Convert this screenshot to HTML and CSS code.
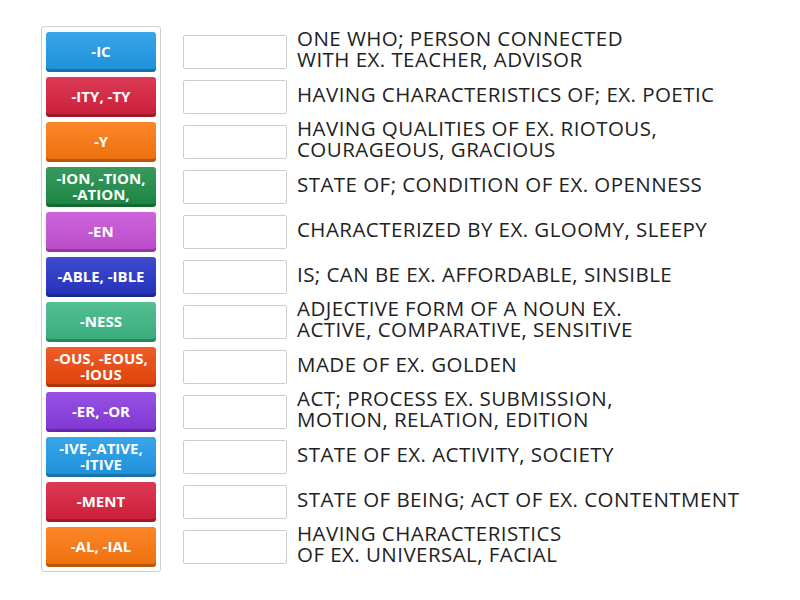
FILE: index.html
```html
<!DOCTYPE html>
<html lang="en">
<head>
    <meta charset="UTF-8">
    <title>Match up</title>
    <link rel="stylesheet" href="styles.css">
</head>
<body>

    <div class="board">
        <div class="tiles">
            <div class="tile blue">-IC</div>
            <div class="tile red">-ITY, -TY</div>
            <div class="tile orange">-Y</div>
            <div class="tile green">-ION, -TION,<br>-ATION,</div>
            <div class="tile pink">-EN</div>
            <div class="tile navy">-ABLE, -IBLE</div>
            <div class="tile teal">-NESS</div>
            <div class="tile rust">-OUS, -EOUS,<br>-IOUS</div>
            <div class="tile purple">-ER, -OR</div>
            <div class="tile blue">-IVE,-ATIVE,<br>-ITIVE</div>
            <div class="tile red">-MENT</div>
            <div class="tile orange">-AL, -IAL</div>
        </div>

        <div class="rows">
            <div class="row"><div class="slot"></div><div class="def">ONE WHO; PERSON CONNECTED<br>WITH EX. TEACHER, ADVISOR</div></div>
            <div class="row"><div class="slot"></div><div class="def">HAVING CHARACTERISTICS OF; EX. POETIC</div></div>
            <div class="row"><div class="slot"></div><div class="def">HAVING QUALITIES OF EX. RIOTOUS,<br>COURAGEOUS, GRACIOUS</div></div>
            <div class="row"><div class="slot"></div><div class="def">STATE OF; CONDITION OF EX. OPENNESS</div></div>
            <div class="row"><div class="slot"></div><div class="def">CHARACTERIZED BY EX. GLOOMY, SLEEPY</div></div>
            <div class="row"><div class="slot"></div><div class="def">IS; CAN BE EX. AFFORDABLE, SINSIBLE</div></div>
            <div class="row"><div class="slot"></div><div class="def">ADJECTIVE FORM OF A NOUN EX.<br>ACTIVE, COMPARATIVE, SENSITIVE</div></div>
            <div class="row"><div class="slot"></div><div class="def">MADE OF EX. GOLDEN</div></div>
            <div class="row"><div class="slot"></div><div class="def">ACT; PROCESS EX. SUBMISSION,<br>MOTION, RELATION, EDITION</div></div>
            <div class="row"><div class="slot"></div><div class="def">STATE OF EX. ACTIVITY, SOCIETY</div></div>
            <div class="row"><div class="slot"></div><div class="def">STATE OF BEING; ACT OF EX. CONTENTMENT</div></div>
            <div class="row"><div class="slot"></div><div class="def">HAVING CHARACTERISTICS<br>OF EX. UNIVERSAL, FACIAL</div></div>
        </div>
    </div>

</body>
</html>
```

FILE: styles.css
```css
body {
    font-family: "Open Sans", Arial, sans-serif;
    background-color: #ffffff;
    margin: 0;
}
.board {
    display: flex;
    align-items: flex-start;
    padding: 26px 0 0 41px;
}
.tiles {
    display: flex;
    flex-direction: column;
    gap: 5px;
    padding: 5px 4px 4px 4px;
    border: 1px solid #cfcfcf;
    border-radius: 3px;
}
.tile {
    width: 110px;
    height: 40px;
    display: flex;
    align-items: center;
    justify-content: center;
    text-align: center;
    color: #ffffff;
    font-weight: bold;
    font-size: 15px;
    line-height: 16px;
    border-radius: 3px;
    background-image: linear-gradient(rgba(255, 255, 255, 0.12), rgba(0, 0, 0, 0.06));
    box-shadow: inset 0 -3px 0 rgba(0, 0, 0, 0.22);
    box-sizing: border-box;
    padding-bottom: 2px;
}
.blue { background-color: #1f99e6; }
.red { background-color: #d71f3d; }
.orange { background-color: #fb760c; }
.green { background-color: #1c8c45; }
.pink { background-color: #c64fd6; }
.navy { background-color: #2533c6; }
.teal { background-color: #3cb684; }
.rust { background-color: #ec460a; }
.purple { background-color: #883ae0; }

.rows {
    display: flex;
    flex-direction: column;
    gap: 5px;
    margin: 6px 0 0 22px;
}
.row {
    display: flex;
    align-items: center;
    height: 40px;
}
.slot {
    width: 104px;
    height: 34px;
    box-sizing: border-box;
    border: 1px solid #cccccc;
    border-radius: 2px;
    flex-shrink: 0;
}
.def {
    margin: 0 0 6px 10px;
    font-size: 20.5px;
    line-height: 21px;
    letter-spacing: 0.45px;
    color: #222222;
    white-space: nowrap;
}
```
